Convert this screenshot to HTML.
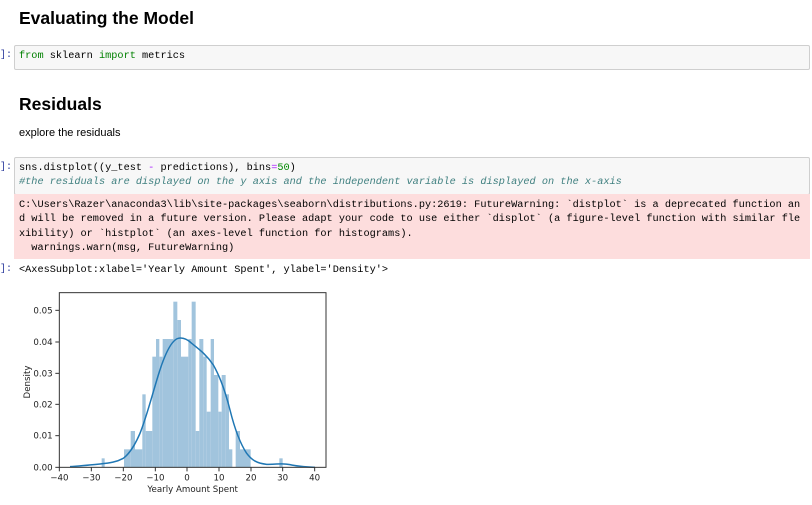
<!DOCTYPE html>
<html><head><meta charset="utf-8"><style>
body{margin:0;width:812px;height:505px;background:#fff;position:relative;overflow:hidden;font-family:"Liberation Sans",sans-serif;color:#000}
.a{position:absolute}
.mono{font-family:"Liberation Mono",monospace;font-size:10.25px;white-space:pre}
.prompt{position:absolute;left:0;color:#303f9f;font-family:"Liberation Mono",monospace;font-size:10px}
.box{position:absolute;left:14px;right:2px;background:#f7f7f7;border:1px solid #cfcfcf;border-radius:2px}
.kw{color:#008000}.nm{color:#080}.op{color:#aa22ff}.cm{color:#408080;font-style:italic}
</style></head><body>
<div class="a" style="left:19px;top:8px;font-size:17.5px;font-weight:bold">Evaluating the Model</div>
<div class="prompt" style="top:50px">]:</div>
<div class="box" style="top:45px;height:23px"></div>
<div class="a mono" style="left:19px;top:50px"><span class="kw">from</span> sklearn <span class="kw">import</span> metrics</div>
<div class="a" style="left:19px;top:94px;font-size:17.5px;font-weight:bold">Residuals</div>
<div class="a" style="left:19px;top:127px;font-size:11px">explore the residuals</div>
<div class="prompt" style="top:162px">]:</div>
<div class="box" style="top:157px;height:36px"></div>
<div class="a mono" style="left:19px;top:161px;line-height:14px">sns.distplot((y_test <span class="op">-</span> predictions), bins<span class="op">=</span><span class="nm">50</span>)
<span class="cm">#the residuals are displayed on the y axis and the independent variable is displayed on the x-axis</span></div>
<div class="a" style="left:14px;right:2px;top:194px;height:65px;background:#fddddd"></div>
<div class="a mono" style="left:19px;top:198px;line-height:14.3px">C:\Users\Razer\anaconda3\lib\site-packages\seaborn\distributions.py:2619: FutureWarning: `distplot` is a deprecated function an
d will be removed in a future version. Please adapt your code to use either `displot` (a figure-level function with similar fle
xibility) or `histplot` (an axes-level function for histograms).
  warnings.warn(msg, FutureWarning)</div>
<div class="prompt" style="top:264px">]:</div>
<div class="a mono" style="left:19px;top:264px">&lt;AxesSubplot:xlabel='Yearly Amount Spent', ylabel='Density'&gt;</div>
<svg class="a" style="left:0;top:290px" width="340" height="210" viewBox="0 0 1020 630">
<g fill="#a1c4dd">
<rect x="305" y="505" width="9" height="27"/>
<rect x="372" y="478" width="20" height="54"/>
<rect x="392" y="423" width="13" height="109"/>
<rect x="405" y="478" width="22" height="54"/>
<rect x="427" y="313" width="10" height="219"/>
<rect x="437" y="423" width="20" height="109"/>
<rect x="457" y="200" width="11" height="332"/>
<rect x="468" y="147" width="10" height="385"/>
<rect x="478" y="200" width="10" height="332"/>
<rect x="488" y="147" width="32" height="385"/>
<rect x="520" y="35" width="12" height="497"/>
<rect x="532" y="90" width="11" height="442"/>
<rect x="543" y="200" width="22" height="332"/>
<rect x="565" y="147" width="10" height="385"/>
<rect x="575" y="35" width="12" height="497"/>
<rect x="587" y="423" width="11" height="109"/>
<rect x="598" y="147" width="12" height="385"/>
<rect x="610" y="200" width="10" height="332"/>
<rect x="620" y="365" width="12" height="167"/>
<rect x="632" y="147" width="10" height="385"/>
<rect x="642" y="255" width="13" height="277"/>
<rect x="655" y="365" width="10" height="167"/>
<rect x="665" y="255" width="12" height="277"/>
<rect x="677" y="313" width="10" height="219"/>
<rect x="687" y="478" width="10" height="54"/>
<rect x="707" y="423" width="13" height="109"/>
<rect x="720" y="478" width="32" height="54"/>
<rect x="838" y="505" width="10" height="27"/>
</g>
<path d="M210,530 C240,528 270,525 300,522 C330,519 350,516 370,505 C390,490 405,465 420,430 C440,380 455,320 475,255 C495,190 515,150 535,145 C548,142 560,146 575,160 C600,180 620,195 640,225 C660,260 675,300 690,360 C705,420 720,460 740,490 C755,510 770,520 800,523 C830,524 845,518 870,524 C895,530 920,531 945,532" fill="none" stroke="#1f77b4" stroke-width="4.5"/>
<rect x="178" y="8" width="800" height="524" fill="none" stroke="#333" stroke-width="3"/>
<g stroke="#333" stroke-width="3">
<line x1="166" y1="532" x2="178" y2="532"/><line x1="166" y1="437" x2="178" y2="437"/><line x1="166" y1="343" x2="178" y2="343"/><line x1="166" y1="250" x2="178" y2="250"/><line x1="166" y1="156" x2="178" y2="156"/><line x1="166" y1="61" x2="178" y2="61"/>
<line x1="178" y1="532" x2="178" y2="544"/><line x1="274" y1="532" x2="274" y2="544"/><line x1="370" y1="532" x2="370" y2="544"/><line x1="466" y1="532" x2="466" y2="544"/><line x1="561" y1="532" x2="561" y2="544"/><line x1="657" y1="532" x2="657" y2="544"/><line x1="753" y1="532" x2="753" y2="544"/><line x1="848" y1="532" x2="848" y2="544"/><line x1="944" y1="532" x2="944" y2="544"/>
</g>
<g font-family="DejaVu Sans,sans-serif" font-size="26" fill="#222" text-anchor="end">
<text x="158" y="541">0.00</text><text x="158" y="446">0.01</text><text x="158" y="352">0.02</text><text x="158" y="259">0.03</text><text x="158" y="165">0.04</text><text x="158" y="70">0.05</text>
</g>
<g font-family="DejaVu Sans,sans-serif" font-size="26" fill="#222" text-anchor="middle">
<text x="178" y="572">−40</text><text x="274" y="572">−30</text><text x="370" y="572">−20</text><text x="466" y="572">−10</text><text x="561" y="572">0</text><text x="657" y="572">10</text><text x="753" y="572">20</text><text x="848" y="572">30</text><text x="944" y="572">40</text>
<text x="578" y="606">Yearly Amount Spent</text>
<text transform="translate(90,276) rotate(-90)">Density</text>
</g>
</svg>
</body></html>
